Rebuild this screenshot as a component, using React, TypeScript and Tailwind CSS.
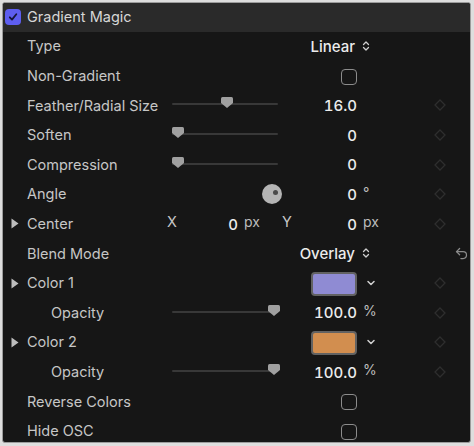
import React from "react";
import { ChevronsUpDown, ChevronDown, Undo2 } from "lucide-react";

const FONT = { fontFamily: "Inter, 'Noto Sans', sans-serif" };

function Triangle() {
  return (
    <svg width="8" height="11" viewBox="0 0 8 11" className="block">
      <path d="M0.5 0.5 L7.5 5.5 L0.5 10.5 Z" fill="#bdbdbd" />
    </svg>
  );
}

function Diamond() {
  return (
    <svg width="12" height="12" viewBox="0 0 12 12" className="block">
      <path d="M6 1 L11 6 L6 11 L1 6 Z" fill="none" stroke="#2e2e2e" strokeWidth="1.3" />
    </svg>
  );
}

function Checkbox() {
  return <div className="w-[16px] h-[16px] rounded-[4px] border-[1.5px] border-[#8c8c8c]" />;
}

function Slider({ frac }: { frac: number }) {
  return (
    <div className="relative ml-[7px] mr-[4px] h-[12px] w-[106px] -mt-[4px]">
      <div className="absolute left-0 right-0 top-[6px] h-[2px] bg-[#383838] rounded" />
      <svg
        width="12"
        height="11"
        viewBox="0 0 12 11"
        className="absolute top-0"
        style={{ left: `${frac * 96}px` }}
      >
        <path d="M1.5 0 H10.5 Q12 0 12 1.5 V6 L6 11 L0 6 V1.5 Q0 0 1.5 0 Z" fill="#a0a0a0" />
      </svg>
    </div>
  );
}

function Dial() {
  return (
    <div className="w-[20px] h-[20px] rounded-full bg-[#b4b4b4] flex items-center justify-end pr-[4px] -mt-[1px]">
      <div className="w-[5px] h-[5px] rounded-full bg-[#4a4a4a] -mt-[2px]" />
    </div>
  );
}

function Swatch({ color }: { color: string }) {
  return (
    <div className="w-[46px] h-[24px] rounded-[4px] border-2 border-[#626262]" style={{ backgroundColor: color }} />
  );
}

type RowProps = {
  tri?: boolean;
  label: string;
  indent?: boolean;
  mid?: React.ReactNode;
  value?: React.ReactNode;
  unit?: React.ReactNode;
  key_?: boolean;
  reset?: boolean;
};

function Row({ tri, label, indent, mid, value, unit, key_, reset }: RowProps) {
  return (
    <div className="grid grid-cols-[24px_138px_117px_75px_38px_75px] items-center h-[29.6px] shrink-0">
      <div className="pl-[8px] flex items-center">{tri ? <Triangle /> : null}</div>
      <div className={`text-[14.5px] text-[#c6c6c6] whitespace-nowrap ${indent ? "pl-[24px]" : ""}`}>{label}</div>
      <div className="flex items-center justify-end h-full">{mid}</div>
      <div className="flex items-center justify-end text-[15px] font-medium tabular-nums text-[#ececec] h-full pt-[2px]">{value}</div>
      <div className="flex items-center h-full text-[14px] text-[#bdbdbd]">{unit}</div>
      <div className="flex items-center h-full">
        <div className="ml-[39px] w-[12px]">{key_ ? <Diamond /> : null}</div>
        <div className="ml-[8px] w-[15px] flex items-center">
          {reset ? <Undo2 size={15} strokeWidth={2} color="#8a8a8a" /> : null}
        </div>
      </div>
    </div>
  );
}

const Unit = ({ children }: { children: React.ReactNode }) => (
  <span className="pl-[6px] pb-[4px]">{children}</span>
);

export default function App() {
  return (
    <div className="w-[474px] h-[446px] bg-[#dedede] pt-[2px] pl-[2px] pr-[3px] pb-[3px]" style={FONT}>
      <div className="w-full h-full border border-[#9c9c9c] rounded-[3px] bg-[#161616] overflow-hidden flex flex-col">
        <div className="h-[28.5px] shrink-0 bg-[#2a2a2a] flex items-center">
          <div className="ml-[2px] w-[16px] h-[16px] rounded-[4px] bg-[#5e5ef0] flex items-center justify-center">
            <svg width="10" height="10" viewBox="0 0 10 10">
              <path d="M1.8 5.3 L4 7.6 L8.3 2.2" fill="none" stroke="#16163a" strokeWidth="1.8" strokeLinecap="round" strokeLinejoin="round" />
            </svg>
          </div>
          <span className="ml-[6px] text-[14.5px] text-[#d6d6d6]">Gradient Magic</span>
        </div>
        <Row
          label="Type"
          value={<span className="pr-[2px]">Linear</span>}
          unit={<span className="pl-[3px] flex items-center"><ChevronsUpDown size={12} strokeWidth={2.6} color="#d0d0d0" /></span>}
        />
        <Row label="Non-Gradient" value={<Checkbox />} />
        <Row label="Feather/Radial Size" mid={<Slider frac={0.51} />} value="16.0" key_ />
        <Row label="Soften" mid={<Slider frac={0} />} value="0" key_ />
        <Row label="Compression" mid={<Slider frac={0} />} value="0" key_ />
        <Row label="Angle" mid={<Dial />} value="0" unit={<Unit>°</Unit>} key_ />
        <Row
          tri
          label="Center"
          mid={
            <div className="flex items-center w-full h-full">
              <span className="pl-[2px] text-[14.5px] text-[#c6c6c6] pb-[3px]">X</span>
              <span className="flex-1" />
              <span className="text-[15px] font-medium tabular-nums text-[#ececec] pt-[2px]">0</span>
              <span className="ml-[6px] text-[14px] text-[#bdbdbd] pb-[4px] w-[16px]">px</span>
              <span className="w-[22px]" />
            </div>
          }
          value={
            <div className="flex items-center w-full">
              <span className="text-[14.5px] font-normal text-[#c6c6c6] pb-[5px]">Y</span>
              <span className="flex-1" />
              <span>0</span>
            </div>
          }
          unit={<Unit>px</Unit>}
          key_
        />
        <Row
          label="Blend Mode"
          value={<span className="pr-[2px]">Overlay</span>}
          unit={<span className="pl-[3px] flex items-center"><ChevronsUpDown size={12} strokeWidth={2.6} color="#d0d0d0" /></span>}
          reset
        />
        <Row
          tri
          label="Color 1"
          value={<Swatch color="#8f8bd3" />}
          unit={<span className="pl-[8px] flex items-center"><ChevronDown size={12} strokeWidth={3} color="#d0d0d0" /></span>}
          key_
        />
        <Row indent label="Opacity" mid={<Slider frac={1} />} value="100.0" unit={<Unit>%</Unit>} key_ />
        <Row
          tri
          label="Color 2"
          value={<Swatch color="#d28e4f" />}
          unit={<span className="pl-[8px] flex items-center"><ChevronDown size={12} strokeWidth={3} color="#d0d0d0" /></span>}
          key_
        />
        <Row indent label="Opacity" mid={<Slider frac={1} />} value="100.0" unit={<Unit>%</Unit>} key_ />
        <Row label="Reverse Colors" value={<Checkbox />} />
        <Row label="Hide OSC" value={<Checkbox />} />
      </div>
    </div>
  );
}
